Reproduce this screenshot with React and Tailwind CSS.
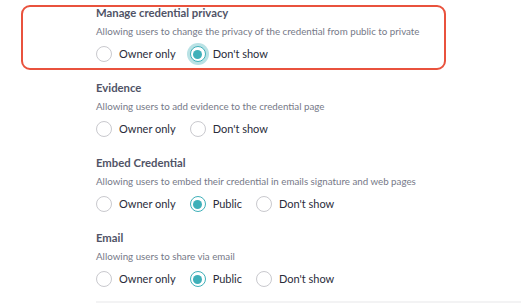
import React from "react";

const sections = [
  {
    title: "Manage credential privacy",
    desc: "Allowing users to change the privacy of the credential from public to private",
    options: ["Owner only", "Don't show"],
    selected: 1,
    focused: true,
    highlight: true,
  },
  {
    title: "Evidence",
    desc: "Allowing users to add evidence to the credential page",
    options: ["Owner only", "Don't show"],
    selected: -1,
  },
  {
    title: "Embed Credential",
    desc: "Allowing users to embed their credential in emails signature and web pages",
    options: ["Owner only", "Public", "Don't show"],
    selected: 1,
  },
  {
    title: "Email",
    desc: "Allowing users to share via email",
    options: ["Owner only", "Public", "Don't show"],
    selected: 1,
  },
];

function Radio({ checked, focused }) {
  if (checked) {
    return (
      <span
        className={
          "flex h-[16px] w-[16px] flex-shrink-0 items-center justify-center rounded-full border border-[#3fb0b9] bg-white " +
          (focused ? "ring-[3px] ring-[#b9e2e5]" : "")
        }
      >
        <span className="h-[9px] w-[9px] rounded-full bg-[#3fb0b9]" />
      </span>
    );
  }
  return <span className="h-[16px] w-[16px] flex-shrink-0 rounded-full border border-[#c9c9ce] bg-white" />;
}

export default function App() {
  return (
    <div className="min-h-[308px] w-[521px] bg-white pt-[5px]" style={{ fontFamily: "Lato, 'Noto Sans', sans-serif" }}>
      <div className="flex flex-col gap-[10px]">
        {sections.map((s, i) => (
          <div
            key={i}
            className={
              "ml-[21px] w-[425px] rounded-[9px] border-2 pl-[73px] pb-[4px] " +
              (s.highlight ? "border-[#e9523d]" : "border-transparent")
            }
          >
            <h3 className="text-[11.3px] font-bold leading-[12px] text-[#505366]">{s.title}</h3>
            <p className="mt-[5px] whitespace-nowrap text-[9.75px] leading-[14px] text-[#767988]">{s.desc}</p>
            <div className="mt-[6px] flex h-[20px] items-center gap-[14px]">
              {s.options.map((o, j) => (
                <label key={j} className="flex items-center gap-[7px]">
                  <Radio checked={s.selected === j} focused={s.focused} />
                  <span className="text-[11px] text-[#2a2c3a]">{o}</span>
                </label>
              ))}
            </div>
          </div>
        ))}
      </div>
      <div className="ml-[96px] mt-[6px] h-[2px] bg-[#f3f3f4]" />
    </div>
  );
}
